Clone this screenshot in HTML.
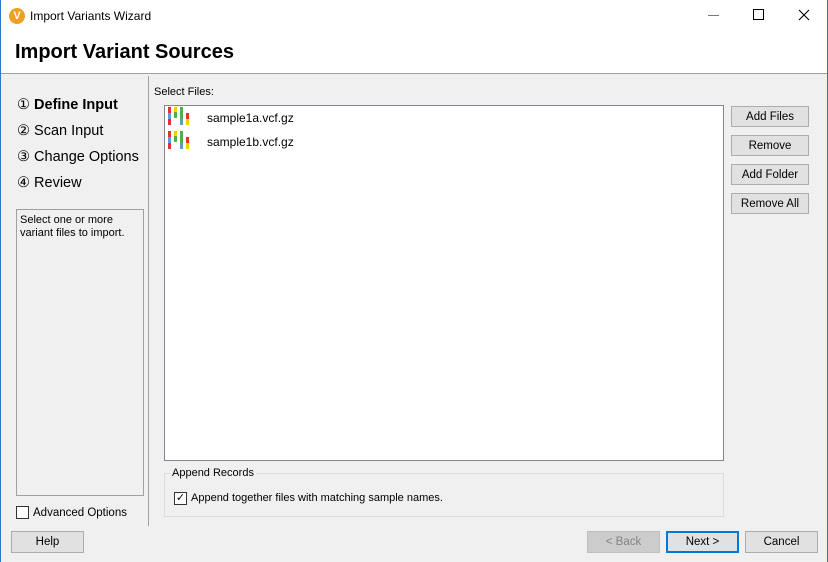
<!DOCTYPE html><html><head><style>
body{margin:0;width:828px;height:562px;overflow:hidden;background:#f0f0f0;font-family:"Liberation Sans",sans-serif;font-size:12px;color:#000;position:relative}
.a{position:absolute}
.btn{position:absolute;height:21px;background:#e1e1e1;border:1px solid #adadad;box-sizing:border-box;display:flex;align-items:center;justify-content:center;font-size:11.5px}
</style></head><body>
<div class="a" style="left:0;top:0;width:828px;height:73px;background:#fff"></div>
<div class="a" style="left:0;top:73px;width:828px;height:1px;background:#a0a0a0"></div>
<div class="a" style="left:0;top:0;width:1px;height:562px;background:#2b79c2"></div>
<div class="a" style="left:827px;top:0;width:1px;height:562px;background:#2b79c2"></div>
<div class="a" style="left:9px;top:8px;width:16px;height:16px;border-radius:50%;background:#f0a020;color:#fff;font-weight:bold;font-size:11px;text-align:center;line-height:16px">V</div>
<div class="a" style="left:30px;top:9px;font-size:12px">Import Variants Wizard</div>
<div class="a" style="left:708px;top:15px;width:11px;height:1px;background:#777"></div>
<div class="a" style="left:753px;top:9px;width:9px;height:9px;border:1px solid #000"></div>
<svg class="a" style="left:798px;top:9px" width="12" height="12"><path d="M1 1L11 11M11 1L1 11" stroke="#000" stroke-width="1.1"/></svg>
<div class="a" style="left:15px;top:41px;font-size:20px;font-weight:bold">Import Variant Sources</div>
<div class="a" style="left:148px;top:76px;width:1px;height:450px;background:#a0a0a0"></div>
<div class="a" style="left:17px;top:92px;font-size:14.5px;line-height:26px">① <b>Define Input</b><br>② Scan Input<br>③ Change Options<br>④ Review</div>
<div class="a" style="left:16px;top:209px;width:128px;height:287px;border:1px solid #a0a0a0;font-size:11px;padding:4px 3px;box-sizing:border-box;line-height:13px">Select one or more variant files to import.</div>
<div class="a" style="left:16px;top:506px;width:11px;height:11px;border:1px solid #333;background:#fff"></div>
<div class="a" style="left:33px;top:507px;font-size:11.5px">Advanced Options</div>
<div class="a" style="left:154px;top:86px;font-size:11px">Select Files:</div>
<div class="a" style="left:164px;top:105px;width:558px;height:354px;border:1px solid #828790;background:#fff"></div>
<svg class="a" style="left:167px;top:106px" width="24" height="50">
<g id="ic"><rect x="1" y="1" width="3" height="6" fill="#d33"/><rect x="1" y="7" width="3" height="6" fill="#5b9bd5"/><rect x="1" y="13" width="3" height="6" fill="#d33"/>
<rect x="7" y="1" width="3" height="5" fill="#f2d000"/><rect x="7" y="6" width="3" height="6" fill="#4caf50"/>
<rect x="13" y="1" width="3" height="12" fill="#4caf50"/><rect x="13" y="13" width="3" height="6" fill="#5b9bd5"/>
<rect x="19" y="7" width="3" height="6" fill="#d33"/><rect x="19" y="13" width="3" height="6" fill="#f2d000"/></g>
<use href="#ic" y="24"/></svg>
<div class="a" style="left:207px;top:111px;font-size:12px">sample1a.vcf.gz</div>
<div class="a" style="left:207px;top:135px;font-size:12px">sample1b.vcf.gz</div>
<div class="a" style="left:164px;top:473px;width:558px;height:42px;border:1px solid #dcdcdc"></div>
<div class="a" style="left:170px;top:467px;font-size:11px;background:#f0f0f0;padding:0 2px">Append Records</div>
<div class="a" style="left:174px;top:492px;width:11px;height:11px;border:1px solid #333;background:#fff;font-size:11px;line-height:11px;text-align:center">✓</div>
<div class="a" style="left:191px;top:492px;font-size:11px">Append together files with matching sample names.</div>
<div class="btn" style="left:731px;top:106px;width:78px">Add Files</div>
<div class="btn" style="left:731px;top:135px;width:78px">Remove</div>
<div class="btn" style="left:731px;top:164px;width:78px">Add Folder</div>
<div class="btn" style="left:731px;top:193px;width:78px">Remove All</div>
<div class="btn" style="left:11px;top:531px;width:73px;height:22px">Help</div>
<div class="btn" style="left:587px;top:531px;width:73px;height:22px;background:#ccc;border-color:#bfbfbf;color:#838383">&lt; Back</div>
<div class="btn" style="left:666px;top:531px;width:73px;height:22px;border:2px solid #0078d7">Next &gt;</div>
<div class="btn" style="left:745px;top:531px;width:73px;height:22px">Cancel</div>
</body></html>
